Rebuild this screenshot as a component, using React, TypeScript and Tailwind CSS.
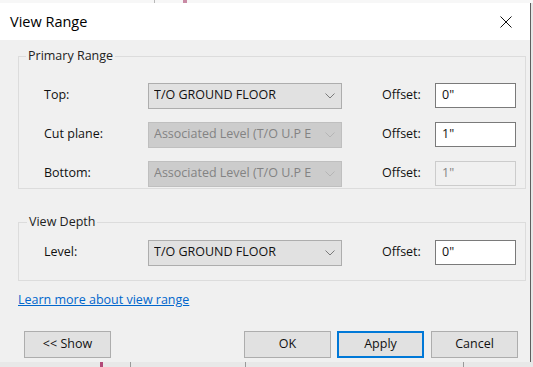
import React from 'react';

const font = { fontFamily: '"Open Sans", "Noto Sans", sans-serif' };

function Chevron({ muted }: { muted?: boolean }) {
  return (
    <svg width="10" height="6" viewBox="0 0 10 6" className="shrink-0">
      <path d="M0.5 0.5 L5 5 L9.5 0.5" fill="none" stroke={muted ? '#b5b5b5' : '#7a7a7a'} strokeWidth="1" />
    </svg>
  );
}

function Select({ value, disabled }: { value: string; disabled?: boolean }) {
  return (
    <div
      className={
        disabled
          ? 'w-[194px] h-[26px] flex items-center justify-between pl-[5px] pr-[6px] bg-[#cccccc] border border-[#bfbfbf] text-[#838383] overflow-hidden'
          : 'w-[194px] h-[26px] flex items-center justify-between pl-[5px] pr-[6px] bg-[#e1e1e1] border border-[#adadad] text-[#111]'
      }
    >
      <span className="whitespace-nowrap overflow-hidden">{value}</span>
      <Chevron muted={disabled} />
    </div>
  );
}

function OffsetInput({ value, disabled }: { value: string; disabled?: boolean }) {
  return (
    <div
      className={
        disabled
          ? 'w-[81px] h-[25px] flex items-center px-[6px] bg-[#f0f0f0] border border-[#cccccc] text-[#838383]'
          : 'w-[81px] h-[25px] flex items-center px-[6px] bg-white border border-[#7a7a7a] text-[#111]'
      }
    >
      {value}
    </div>
  );
}

function Row({ label, value, offset, selDisabled, inDisabled }: {
  label: string; value: string; offset: string; selDisabled?: boolean; inDisabled?: boolean;
}) {
  return (
    <div className="flex items-center h-[26px]">
      <span className="w-[104px]">{label}</span>
      <Select value={value} disabled={selDisabled} />
      <span className="ml-[40px] w-[53px]">Offset:</span>
      <OffsetInput value={offset} disabled={inDisabled} />
    </div>
  );
}

function Button({ children, primary, className }: { children: React.ReactNode; primary?: boolean; className?: string }) {
  return (
    <div
      className={
        'h-[27px] w-[87px] flex items-center justify-center bg-[#e1e1e1] ' +
        (primary ? 'border-2 border-[#0078d7] ' : 'border border-[#adadad] ') +
        (className ?? '')
      }
    >
      {children}
    </div>
  );
}

export default function App() {
  return (
    <div className="w-[533px] h-[367px] overflow-hidden bg-[#ececec] flex flex-col text-[12.5px] text-[#111]" style={font}>
      {/* canvas behind the dialog */}
      <div className="h-[3px] flex bg-[#f7f7f7]">
        <div className="w-[240px]" />
        <div className="w-px bg-[#b8b8b8]" />
        <div className="w-[45px]" />
        <div className="w-[6px] bg-[#c98aa4]" />
        <div className="w-[540px]" />
      </div>

      <div className="flex h-[359px]">
        <div className="w-[531px] flex flex-col border-r border-[#5e5e5e]">
          {/* title bar */}
          <div className="h-[37px] bg-white flex items-center justify-between pl-[10px] pr-[18px]">
            <span className="text-[14.5px] text-black">View Range</span>
            <svg width="12" height="12" viewBox="0 0 12 12">
              <path d="M0.5 0.5 L11.5 11.5 M11.5 0.5 L0.5 11.5" stroke="#111" strokeWidth="1" />
            </svg>
          </div>

          {/* body */}
          <div className="flex-1 bg-[#f0f0f0] flex flex-col pl-[18px] pr-[4px] pt-[7px]">
            <fieldset className="border border-[#dcdcdc] pl-[25px] pr-[9px] pt-[17px] pb-[1px] flex flex-col gap-[13px]">
              <legend className="ml-[-18px] px-[2px] text-[#222]">Primary Range</legend>
              <Row label="Top:" value="T/O GROUND FLOOR" offset={'0"'} />
              <Row label="Cut plane:" value="Associated Level (T/O U.P E" offset={'1"'} selDisabled />
              <Row label="Bottom:" value="Associated Level (T/O U.P E" offset={'1"'} selDisabled inDisabled />
            </fieldset>

            <fieldset className="mt-[24px] border border-[#dcdcdc] pl-[25px] pr-[9px] pt-[8px] pb-[14px]">
              <legend className="ml-[-17px] px-[2px] text-[#222]">View Depth</legend>
              <Row label="Level:" value="T/O GROUND FLOOR" offset={'0"'} />
            </fieldset>

            <a className="mt-[10px] w-fit text-[#0066cc] underline">Learn more about view range</a>

            <div className="mt-[22px] flex items-center pl-[6px] pr-[8px]">
              <Button>&lt;&lt; Show</Button>
              <div className="flex-1" />
              <Button>OK</Button>
              <Button primary className="ml-[6px]">Apply</Button>
              <Button className="ml-[7px]">Cancel</Button>
            </div>
          </div>
        </div>
        <div className="flex-1 bg-[#e6e6e6]" />
      </div>

      <div className="flex-1 flex bg-[#e8e8e8]">
        <div className="w-[100px]" />
        <div className="w-[3px] bg-[#b24a78]" />
        <div className="w-[27px]" />
        <div className="w-px bg-[#9a9a9a]" />
        <div className="w-[114px]" />
        <div className="w-px bg-[#9a9a9a]" />
        <div className="w-[217px]" />
        <div className="w-px bg-[#9a9a9a]" />
      </div>
    </div>
  );
}
